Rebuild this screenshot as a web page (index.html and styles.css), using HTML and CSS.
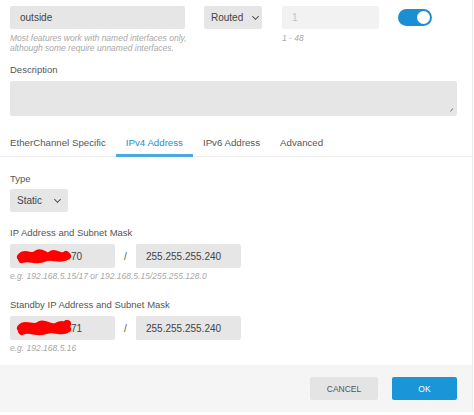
FILE: index.html
```html
<!DOCTYPE html>
<html lang="en">
<head>
    <meta charset="UTF-8">
    <title>Edit EtherChannel</title>
    <link rel="stylesheet" href="styles.css">
</head>
<body>

<div class="dialog">
    <div class="content">
        <div class="top-row">
            <div class="field name-field">
                <div class="input">outside</div>
                <div class="hint">Most features work with named interfaces only,<br>although some require unnamed interfaces.</div>
            </div>
            <div class="select mode-select">Routed <span class="caret"></span></div>
            <div class="field id-field">
                <div class="input disabled">1</div>
                <div class="hint">1 - 48</div>
            </div>
            <div class="toggle"><span class="knob"></span></div>
        </div>

        <div class="label desc-label">Description</div>
        <div class="textarea"><span class="grip"></span></div>

        <div class="tabs">
            <div class="tab">EtherChannel Specific</div>
            <div class="tab active">IPv4 Address</div>
            <div class="tab">IPv6 Address</div>
            <div class="tab">Advanced</div>
        </div>

        <div class="label type-label">Type</div>
        <div class="select type-select">Static <span class="caret"></span></div>

        <div class="label ip-label">IP Address and Subnet Mask</div>
        <div class="ip-row">
            <div class="input ip">
                <svg class="scribble" width="56" height="18" viewBox="0 0 56 18">
                    <path d="M5 10 C10 4 15 13 21 7 C26 3 30 13 35 8 C40 4 44 13 50 8 M6 12 C14 9 20 15 28 11 C36 7 44 14 51 9" fill="none" stroke="#ff0000" stroke-width="8" stroke-linecap="round"/>
                </svg>70
            </div>
            <span class="slash">/</span>
            <div class="input mask">255.255.255.240</div>
        </div>
        <div class="hint">e.g. 192.168.5.15/17 or 192.168.5.15/255.255.128.0</div>

        <div class="label standby-label">Standby IP Address and Subnet Mask</div>
        <div class="ip-row">
            <div class="input ip">
                <svg class="scribble" width="56" height="18" viewBox="0 0 56 18">
                    <path d="M5 9 C10 3 17 12 24 6 C30 3 35 12 42 7 C47 4 50 9 51 5 M6 12 C14 8 21 15 30 11 C38 8 45 14 51 10" fill="none" stroke="#ff0000" stroke-width="8" stroke-linecap="round"/>
                </svg>71
            </div>
            <span class="slash">/</span>
            <div class="input mask">255.255.255.240</div>
        </div>
        <div class="hint">e.g. 192.168.5.16</div>
    </div>

    <div class="footer">
        <button class="btn cancel">CANCEL</button>
        <button class="btn ok">OK</button>
    </div>
</div>

</body>
</html>
```

FILE: styles.css
```css
body {
    margin: 0;
    background: #fff;
    font-family: "Liberation Sans", Arial, sans-serif;
    color: #555;
}

.dialog {
    width: 472px;
    height: 412px;
    border-right: 1px solid #ececec;
    display: flex;
    flex-direction: column;
}

.content {
    flex: 1;
    padding: 6px 0 0 10px;
}

.top-row {
    display: flex;
    align-items: flex-start;
}

.input {
    height: 23px;
    background: #e6e6e6;
    border-radius: 2px;
    font-size: 10px;
    color: #444;
    padding-left: 10px;
    display: flex;
    align-items: center;
    box-sizing: border-box;
}

.input.disabled {
    background: #f2f2f2;
    color: #c2c2c2;
}

.name-field { width: 175px; }

.id-field {
    width: 97px;
    margin-left: 20px;
}

.hint {
    font-size: 8.5px;
    font-style: italic;
    color: #a8a8a8;
    line-height: 10px;
    margin-top: 4px;
    white-space: nowrap;
}

.select {
    height: 23px;
    background: #e6e6e6;
    border-radius: 2px;
    font-size: 10px;
    color: #444;
    display: flex;
    align-items: center;
    padding-left: 7px;
    box-sizing: border-box;
}

.caret {
    width: 4px;
    height: 4px;
    border-right: 1.5px solid #555;
    border-bottom: 1.5px solid #555;
    transform: rotate(45deg);
    margin: -3px 0 0 10px;
}

.mode-select {
    width: 58px;
    margin-left: 19px;
}

.toggle {
    width: 34px;
    height: 17px;
    border-radius: 9px;
    background: #1a8fd4;
    margin: 3px 0 0 19px;
    position: relative;
}

.knob {
    position: absolute;
    right: 2px;
    top: 2px;
    width: 13px;
    height: 13px;
    border-radius: 50%;
    background: #fff;
}

.label {
    font-size: 9.5px;
    color: #555;
    line-height: 12px;
}

.desc-label { margin-top: 11px; }

.textarea {
    width: 447px;
    height: 35px;
    margin-top: 5px;
    background: #e6e6e6;
    border-radius: 2px;
    position: relative;
}

.grip {
    position: absolute;
    right: 2px;
    bottom: 2px;
    width: 4px;
    height: 4px;
    border-top: 1px solid #888;
    transform: rotate(-45deg);
}

.tabs {
    display: flex;
    margin: 20px 0 0 -10px;
    padding-left: 10px;
    border-bottom: 1px solid #eee;
    width: 462px;
}

.tab {
    font-size: 9.7px;
    color: #555;
    padding: 1px 10px 0;
    height: 19px;
    line-height: 12px;
    box-sizing: border-box;
}

.tab:first-child { padding-left: 0; }

.tab.active {
    color: #1d8fd6;
    border-bottom: 3px solid #4aa9e0;
    height: 21px;
    margin-bottom: -1px;
}

.type-label { margin-top: 16px; }

.type-select {
    width: 58px;
    margin-top: 4px;
    justify-content: space-between;
    padding-right: 8px;
}

.type-select .caret { margin-left: 0; }

.ip-label { margin-top: 15px; }

.ip-row {
    display: flex;
    align-items: center;
    margin-top: 5px;
}

.ip-row .input { width: 105px; height: 24px; }

.ip .scribble { margin: 0 -1px 0 -4px; }

.slash {
    font-size: 10px;
    width: 21px;
    text-align: center;
}

.ip-row + .hint { margin-top: 3px; }

.standby-label { margin-top: 18px; }

.footer {
    height: 47px;
    background: #f5f5f5;
    display: flex;
    justify-content: flex-end;
    align-items: center;
    padding-right: 15px;
    gap: 14px;
}

.btn {
    height: 23px;
    border: none;
    border-radius: 2px;
    font-family: inherit;
    font-size: 8.5px;
}

.cancel {
    width: 68px;
    background: #e4e4e4;
    color: #555;
}

.ok {
    width: 65px;
    background: #1a95d8;
    color: #fff;
}
```
